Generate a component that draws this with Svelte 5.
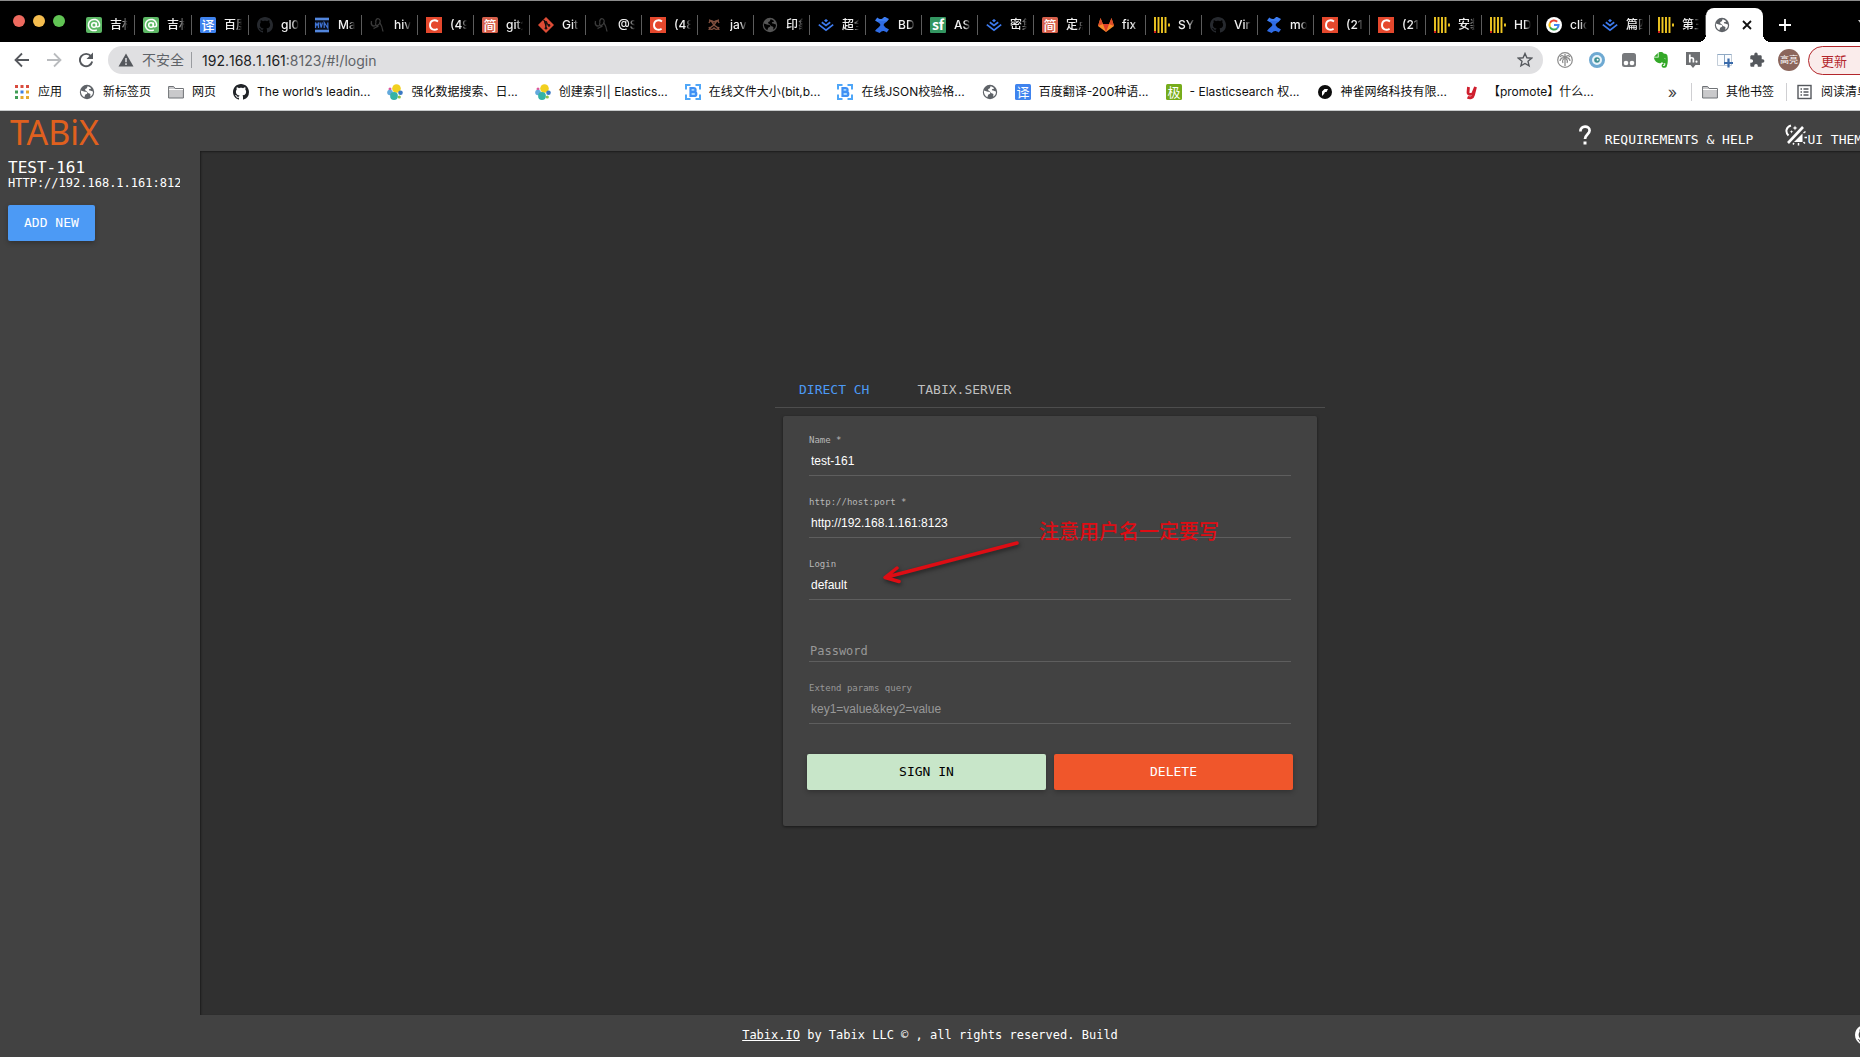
<script>
  let activeTab = $state('direct');
  let form = $state({
    name: 'test-161',
    host: 'http://192.168.1.161:8123',
    login: 'default',
    password: '',
    params: ''
  });

  const browserTabs = [
    { icon: 'mail', title: '吉林' },
    { icon: 'mail', title: '吉林' },
    { icon: 'yi', title: '百度' },
    { icon: 'githubDim', title: 'gl0b' },
    { icon: 'mvn', title: 'Mav' },
    { icon: 'hive', title: 'hive' },
    { icon: 'csdn', title: '(49条' },
    { icon: 'jian', title: 'git分' },
    { icon: 'git', title: 'Git -' },
    { icon: 'hive', title: '@Sp' },
    { icon: 'csdn', title: '(48条' },
    { icon: 'knot', title: 'java' },
    { icon: 'globeDim', title: '印象' },
    { icon: 'juejin', title: '超全' },
    { icon: 'confluence', title: 'BDP' },
    { icon: 'sf', title: 'ASC' },
    { icon: 'juejin', title: '密集' },
    { icon: 'jian', title: '定点' },
    { icon: 'gitlab', title: 'fix ' },
    { icon: 'clickhouse', title: 'SYS' },
    { icon: 'githubDim', title: 'Virt' },
    { icon: 'confluence', title: 'mo数' },
    { icon: 'csdn', title: '(21条' },
    { icon: 'csdn', title: '(21条' },
    { icon: 'clickhouse', title: '安装' },
    { icon: 'clickhouse', title: 'HDF' },
    { icon: 'google', title: 'click' },
    { icon: 'juejin', title: '篇四' },
    { icon: 'clickhouse', title: '第三' }
  ];

  const bookmarks = [
    { icon: 'apps', title: '应用' },
    { icon: 'globe', title: '新标签页' },
    { icon: 'folder', title: '网页' },
    { icon: 'github', title: 'The world’s leadin...' },
    { icon: 'elastic', title: '强化数据搜索、日...' },
    { icon: 'elastic', title: '创建索引| Elastics...' },
    { icon: 'bejson', title: '在线文件大小(bit,b...' },
    { icon: 'bejson', title: '在线JSON校验格...' },
    { icon: 'globe', title: '' },
    { icon: 'yi', title: '百度翻译-200种语...' },
    { icon: 'ji', title: '- Elasticsearch 权...' },
    { icon: 'compass', title: '神雀网络科技有限...' },
    { icon: 'yred', title: '【promote】什么...' }
  ];

  const extensions = ['palm', 'eye', 'robot', 'evernote', 'hypothesis', 'addPanel', 'puzzle'];
</script>

{#snippet tile(char, fill)}
  <rect width="16" height="16" rx="1.5" {fill} />
  <text x="8" y="12.6" text-anchor="middle" font-size="13" fill="#fff">{char}</text>
{/snippet}

{#snippet octocat(fill)}
  <path {fill} d="M8 0C3.58 0 0 3.58 0 8c0 3.54 2.29 6.53 5.47 7.59.4.07.55-.17.55-.38 0-.19-.01-.82-.01-1.49-2.01.37-2.53-.49-2.69-.94-.09-.23-.48-.94-.82-1.13-.28-.15-.68-.52-.01-.53.63-.01 1.08.58 1.23.82.72 1.21 1.87.87 2.33.66.07-.52.28-.87.51-1.07-1.78-.2-3.64-.89-3.64-3.95 0-.87.31-1.59.82-2.15-.08-.2-.36-1.02.08-2.12 0 0 .67-.21 2.2.82.64-.18 1.32-.27 2-.27s1.36.09 2 .27c1.53-1.04 2.2-.82 2.2-.82.44 1.1.16 1.92.08 2.12.51.56.82 1.27.82 2.15 0 3.07-1.87 3.75-3.65 3.95.29.25.54.73.54 1.48 0 1.07-.01 1.93-.01 2.2 0 .21.15.46.55.38A8.01 8.01 0 0 0 16 8c0-4.42-3.58-8-8-8z" />
{/snippet}

{#snippet globe(fill, land)}
  <circle cx="8" cy="8" r="7.2" {fill} />
  <path fill={land} d="M1.8 6.6 5 7.4c1.2.3 2.4.2 3 .9.8.8 0 1.9-1 2-.9.1-1 1-1.6 2.9C3.2 12.3 1.7 9.8 1.8 6.6zM8.6 2.2c1 .2 2.7 1 3.5 2.1-.5 1-1.4.4-2 .9-.7.6.1 1.3 1 1.3 1.3 0 1.5 1 2.9.9.1 2.4-1 4.2-2.7 5.3-.2-1.3.6-2.2-.3-2.9-.8-.6-2.2-.4-2.500-1.500-.3-1.200-1.600-1.300-2.300-2.100-.5-.8.3-1.600 1.200-1.800.8-.2.7-1.400 1.200-2.200z" />
{/snippet}

{#snippet icon(name)}
  <svg class="icon" viewBox="0 0 16 16" aria-hidden="true">
    {#if name === 'mail'}
      <rect width="16" height="16" rx="2" fill="#5db865" />
      <circle cx="8" cy="8" r="5.6" fill="none" stroke="#fff" stroke-width="1.5" stroke-dasharray="30 6" transform="rotate(60 8 8)" />
      <circle cx="8" cy="8" r="2.3" fill="none" stroke="#fff" stroke-width="1.5" />
      <path d="M10.4 5.6v3.2c0 1.5 2.6 1.5 3-.2" fill="none" stroke="#fff" stroke-width="1.4" />
    {:else if name === 'yi'}
      {@render tile('译', '#3f83ee')}
    {:else if name === 'jian'}
      {@render tile('简', '#d6604c')}
    {:else if name === 'ji'}
      {@render tile('极', '#76ac1b')}
    {:else if name === 'githubDim'}
      {@render octocat('#26292e')}
    {:else if name === 'github'}
      {@render octocat('#202327')}
    {:else if name === 'mvn'}
      <rect x="1" width="14" height="16" fill="#0a0f1c" />
      <path d="M1 2h14M1 14h14" stroke="#5286dd" stroke-width="2.4" />
      <path d="M1.500 11V5.500l1.500 3 1.500-3V11M6 5.500l1.200 5 1.200-5M10.200 11V5.500l3.600 5.500V5.500" fill="none" stroke="#3f74d6" stroke-width="1.200" />
    {:else if name === 'hive'}
      <path d="M1.500 4c-1 4 1 6 4 4.500M6 6c-1-3 1-5 3-4s1.500 5-1 6-3-1-2-2M9.500 5c2 3 3 6 3.500 9.500M8.500 9c-2 .5-3 2-5 2.500" fill="none" stroke="#3b3b3b" stroke-width="1.300" />
    {:else if name === 'csdn'}
      <rect width="16" height="16" fill="#e5482d" />
      <path d="M12 4.500C8.500 2 4 3.500 4 8.200c0 4.500 4.400 5.600 7.600 3.500" fill="none" stroke="#fff" stroke-width="1.900" />
    {:else if name === 'git'}
      <path d="M8 0l8 8-8 8-8-8z" fill="#de4c36" />
      <path d="M5.500 2.800 8 5.300v6M8 5.500l3 3" stroke="#1b1210" stroke-width="1.200" />
      <circle cx="8" cy="5.300" r="1.300" fill="#1b1210" />
      <circle cx="8" cy="11.300" r="1.300" fill="#1b1210" />
      <circle cx="11" cy="8.400" r="1.300" fill="#1b1210" />
    {:else if name === 'knot'}
      <path d="M3 3c3 0 3 3 5 5s5 2 5 5M13 3c-3 0-3 3-5 5s-5 2-5 5M3 6c1-3 3-3 5-1 2-2 4-2 5 1M3 10c1 3 3 3 5 1 2 2 4 2 5-1" fill="none" stroke="#80503f" stroke-width="1.400" />
    {:else if name === 'globeDim'}
      {@render globe('#555', '#000')}
    {:else if name === 'globe'}
      {@render globe('#5f6368', '#fff')}
    {:else if name === 'juejin'}
      <path d="M8 2l2 1.600L8 5.200 6 3.600z" fill="#3d7bf0" />
      <path d="M3.800 5.300 8 8.500l4.200-3.200M.8 7.600 8 13.200l7.200-5.600" fill="none" stroke="#3d7bf0" stroke-width="1.700" />
    {:else if name === 'confluence'}
      <path d="M1 3.500 3.300.5c3 2.300 5 2 7-1L15 2c-3 5-7.500 6-14 1.500z" fill="#3c7df3" />
      <path d="M15 12.500 12.700 15.500c-3-2.300-5-2-7 .5L1 14c3-5 7.500-6 14-1.500z" fill="#2f6ce5" />
      <path d="M4 4h8L9.500 8l3 4H3.500l3-4z" fill="#2f6ce5" />
    {:else if name === 'sf'}
      <rect width="16" height="16" rx="1" fill="#339661" />
      <text x="8" y="13" text-anchor="middle" font-size="14" font-weight="700" fill="#fff">sf</text>
    {:else if name === 'gitlab'}
      <path d="M8 15 0 9l2.500-8 2.400 6h6.200l2.400-6L16 9z" fill="#fa8e2b" />
      <path d="M8 15 4.900 7h6.200z" fill="#df3d28" />
      <path d="M0 9 2.500 1l2.400 6zM16 9l-2.500-8-2.400 6z" fill="#dd4b2a" />
    {:else if name === 'clickhouse'}
      <path d="M1 0v14M4.500 0v16M8 0v16M11.500 0v16M15 6.500v3" stroke="#f1c822" stroke-width="1.900" />
      <path d="M1 14v2" stroke="#e02020" stroke-width="1.900" />
    {:else if name === 'google'}
      <circle cx="8" cy="8" r="8" fill="#fff" />
      <path d="M11.200 4.700A4.600 4.600 0 0 0 4 5.800" fill="none" stroke="#ea4335" stroke-width="2" />
      <path d="M4 5.800a4.600 4.600 0 0 0 0 4.400" fill="none" stroke="#fbbc05" stroke-width="2" />
      <path d="M4 10.200a4.600 4.600 0 0 0 7 1.300" fill="none" stroke="#34a853" stroke-width="2" />
      <path d="M8 8h4.600c0 1.500-.6 2.700-1.600 3.500" fill="none" stroke="#4285f4" stroke-width="2" />
    {:else if name === 'apps'}
      <path d="M1 1h3v3H1zM6.500 1h3v3h-3zM12 1h3v3h-3z" fill="#d94c3f" />
      <path d="M1 6.500h3v3H1z" fill="#3f9c55" /><path d="M6.500 6.500h3v3h-3z" fill="#3f7fe0" /><path d="M12 6.500h3v3h-3z" fill="#e6a92d" />
      <path d="M1 12h3v3H1z" fill="#3f9c55" /><path d="M6.500 12h3v3h-3zM12 12h3v3h-3z" fill="#e6a92d" />
    {:else if name === 'folder'}
      <path d="M.6 2.500h5l1.500 2h8.300v9.500H.6z" fill="#c9c9cb" stroke="#6f7276" />
      <path d="M1 5.500h14" stroke="#fff" />
    {:else if name === 'elastic'}
      <circle cx="9.500" cy="4.500" r="4.300" fill="#f2d01f" />
      <circle cx="3" cy="5" r="1.500" fill="#e0569b" />
      <circle cx="3" cy="8.500" r="2.800" fill="#62a9dc" />
      <circle cx="13.500" cy="8.800" r="2.300" fill="#3a78c4" />
      <circle cx="7" cy="12" r="3.900" fill="#35b3a6" />
      <circle cx="12.300" cy="13" r="1.600" fill="#8bc34a" />
    {:else if name === 'bejson'}
      <path d="M1 5.500V1h4.500M10.500 1H15v4.500M15 10.500V15h-4.500M5.500 15H1v-4.500" fill="none" stroke="#4ea6f8" stroke-width="2" />
      <path d="M5.500 4h3c2.800 0 2.800 3.800 0 3.800h-3 3.400c3.200 0 3.200 4.200 0 4.200H5.500z" fill="#a9d8ff" stroke="#3f90f4" stroke-width="2.200" />
    {:else if name === 'compass'}
      <circle cx="8" cy="8" r="7" fill="#0c0c0c" />
      <path d="M5 12V7.500L7.500 5H11L9.500 8H8l-1 2z" fill="#fff" />
    {:else if name === 'yred'}
      <path d="M4.500 3 4 8.500c-.2 2.400 4.200 2.200 5 .500L11.500 3 9.500 11c-.6 2.800-3.500 3.300-6 2.200" fill="none" stroke="#cf1f2e" stroke-width="2.800" />
    {:else if name === 'palm'}
      <circle cx="8" cy="8" r="7.300" fill="none" stroke="#8b8b8b" stroke-width="1.200" />
      <path d="M8 6v8M8 6C6 3 4 3 3 5M8 6c2-3 4-3 5-1M8 6C5 5 3 7 3 9M8 6c3-1 5 1 5 3M8 6C6 7 5 9 6 11M8 6c2 1 3 3 2 5M8 6V2" fill="none" stroke="#8b8b8b" stroke-width="1.300" />
    {:else if name === 'eye'}
      <circle cx="8" cy="8" r="6.500" fill="#e8f3fa" stroke="#6ea9d2" stroke-width="3" />
      <circle cx="8" cy="8" r="2.800" fill="#3f8f92" />
      <circle cx="8.600" cy="7.800" r="1" fill="#fff" />
    {:else if name === 'robot'}
      <rect x="1" y="1" width="14" height="14" rx="2.500" fill="#77797c" />
      <circle cx="5" cy="11" r="2.300" fill="#fff" /><circle cx="11" cy="11" r="2.300" fill="#fff" />
    {:else if name === 'evernote'}
      <path d="M1 4.800 4.800 1v3.800zM5.600.5c2-.9 4.300-.4 5 .9 2 .3 3.500.6 3.800 2.200.8 4 .4 8.400-.8 11.100-.7 1.600-4.800 1.600-5-.8-.1-2 1.400-2.600 2.600-2.400v1.200c-1.500 0-1.400 1.400-.2 1.300 1.700-.2 1.400-2.600 1.100-3-1 .5-2.600-.1-3.100-1.100C7.500 12.500 1.800 11 .8 5.600h4.800z" fill="#33a828" />
      <path d="M11 6.800c.7-.6 1.600-.4 2 .5z" fill="#fff" />
    {:else if name === 'hypothesis'}
      <path d="M1 0h14v13h-4.500L8 16l-2.500-3H1z" fill="#6d6f72" />
      <path d="M4.800 2.500v8M4.800 7.300c.4-2 3.600-2.200 3.600.2v3" fill="none" stroke="#fff" stroke-width="1.700" />
      <circle cx="11.500" cy="9.700" r="1.100" fill="#fff" />
    {:else if name === 'addPanel'}
      <path d="M.5 2.500h14v11H.5z" fill="#fbfdff" stroke="#c3cdd8" />
      <path d="M.5 2.500h14M7.500 2v11" stroke="#8fa9c4" />
      <path d="M11.500 6.500v9M7 11h9" stroke="#3a6bab" stroke-width="2.200" />
    {:else if name === 'puzzle'}
      <path d="M13.700 7.300h-1V4.600c0-.8-.6-1.300-1.300-1.300H8.700v-1a1.700 1.700 0 0 0-3.400 0v1H2.700c-.8 0-1.400.6-1.400 1.300v2.600h1a1.800 1.800 0 0 1 0 3.600h-1v2.600c0 .7.6 1.300 1.400 1.300h2.500v-1a1.800 1.800 0 0 1 3.600 0v1h2.600c.7 0 1.300-.6 1.300-1.300v-2.700h1a1.700 1.700 0 0 0 0-3.400z" fill="#55585d" />
    {:else if name === 'list'}
      <rect x="1" y="1.500" width="13" height="13" fill="none" stroke="#55585d" stroke-width="1.400" />
      <path d="M3.500 5h1.500M3.500 8h1.500M3.500 11h1.500M6.500 5h5M6.500 8h5M6.500 11h5" stroke="#55585d" stroke-width="1.400" />
    {:else if name === 'back'}
      <path d="M15 8H2M8 1.500 1.500 8 8 14.500" fill="none" stroke="#55585d" stroke-width="1.800" />
    {:else if name === 'forward'}
      <path d="M1 8h13M8 1.500 14.500 8 8 14.500" fill="none" stroke="#b9bbbe" stroke-width="1.800" />
    {:else if name === 'reload'}
      <path d="M13 4.200A6.200 6.200 0 1 0 14.200 9.500" fill="none" stroke="#55585d" stroke-width="1.900" />
      <path d="M15 .5V7H8.500z" fill="#55585d" />
    {:else if name === 'warning'}
      <path d="M8 1.500 15.500 14.500H.5z" fill="#55585d" />
      <path d="M8 6v4.300M8 11.300v1.700" stroke="#e0e0e2" stroke-width="1.500" />
    {:else if name === 'star'}
      <path d="M8 1.500l1.900 4.300 4.700.4-3.600 3.100 1.100 4.600L8 11.500l-4.100 2.400L5 9.300 1.400 6.200l4.700-.4z" fill="none" stroke="#55585d" stroke-width="1.400" />
    {/if}
  </svg>
{/snippet}

<div class="screen">
  <header class="browser">
    <div class="tabstrip">
      <div class="lights">
        <span class="light red"></span>
        <span class="light yellow"></span>
        <span class="light green"></span>
      </div>
      {#each browserTabs as tab}
        <div class="tab">
          {@render icon(tab.icon)}
          <span class="tab-title">{tab.title}</span>
        </div>
      {/each}
      <div class="tab current">
        {@render icon('globe')}
        <button class="bare" aria-label="关闭">
          <svg width="10" height="10" viewBox="0 0 10 10"><path d="M1 1l8 8M9 1L1 9" stroke="#111" stroke-width="1.800" /></svg>
        </button>
      </div>
      <button class="bare new-tab" aria-label="新标签页">
        <svg width="12" height="12" viewBox="0 0 12 12"><path d="M6 0v12M0 6h12" stroke="#fff" stroke-width="1.800" /></svg>
      </button>
      <button class="bare tab-search" aria-label="搜索标签页">
        <svg width="12" height="8" viewBox="0 0 12 8"><path d="M0 0h12L6 8z" fill="#c8c8c8" /></svg>
      </button>
    </div>

    <div class="toolbar">
      <button class="bare" aria-label="后退">{@render icon('back')}</button>
      <button class="bare" aria-label="前进">{@render icon('forward')}</button>
      <button class="bare" aria-label="重新加载">{@render icon('reload')}</button>
      <div class="address">
        {@render icon('warning')}
        <span class="insecure">不安全</span>
        <span class="url"><b>192.168.1.161</b>:8123/#!/login</span>
        <button class="bare" aria-label="收藏">{@render icon('star')}</button>
      </div>
      {#each extensions as ext}
        <button class="bare" aria-label={ext}>{@render icon(ext)}</button>
      {/each}
      <span class="avatar">高亮</span>
      <button class="update">更新</button>
    </div>

    <nav class="bookmarks">
      {#each bookmarks as mark}
        <a href="#!/login">
          {@render icon(mark.icon)}
          {#if mark.title}<span>{mark.title}</span>{/if}
        </a>
      {/each}
      <span class="more">»</span>
      <a class="divided" href="#!/login">{@render icon('folder')}<span>其他书签</span></a>
      <a class="divided" href="#!/login">{@render icon('list')}<span>阅读清单</span></a>
    </nav>
  </header>

  <div class="app">
    <header class="topbar">
      <span class="logo">TABiX</span>
      <a class="help" href="#!/help">
        <svg width="12" height="20" viewBox="0 0 12 20"><path d="M1.400 6.500C1.400 0 10.600.2 10.600 5.600 10.600 9 6 9.500 6 14" fill="none" stroke="#fff" stroke-width="2.700" /><path d="M4.500 16.500h3v3h-3z" fill="#fff" /></svg>
        <span>REQUIREMENTS &amp; HELP</span>
      </a>
      <a class="theme" href="#!/theme">
        <svg width="22" height="22" viewBox="0 0 22 22">
          <path d="M6 1.500C1 3 0 8 3.500 11.500" fill="none" stroke="#fff" stroke-width="2" />
          <path d="M3 19 18 3" stroke="#fff" stroke-width="2.600" />
          <path d="M10 1.500l.7 1.800 1.800.7-1.800.7-.7 1.800-.7-1.800L7.500 4l1.800-.7zM6.500 6l.5 1.300 1.300.5L7 8.300l-.5 1.300L6 8.300l-1.300-.5L6 7.300z" fill="#fff" />
          <path d="M17.500 9.500v8.500H9z" fill="#fff" />
          <path d="M18.500 9l2-1.500M19.500 13.500h2.500M18.500 18l1.500 1.500M13.500 19v2.500M9 19l-1 1.500" stroke="#fff" stroke-width="1.500" />
        </svg>
        <span>UI THEME</span>
      </a>
    </header>

    <div class="body">
      <aside class="sidebar">
        <div class="conn-name">TEST-161</div>
        <div class="conn-host">HTTP://192.168.1.161:8123</div>
        <button class="btn add">ADD NEW</button>
      </aside>

      <div class="content">
        <main>
          <section class="login">
            <div class="modes" role="tablist">
              <button role="tab" aria-selected={activeTab === 'direct'} class:active={activeTab === 'direct'} onclick={() => (activeTab = 'direct')}>DIRECT CH</button>
              <button role="tab" aria-selected={activeTab === 'server'} class:active={activeTab === 'server'} onclick={() => (activeTab = 'server')}>TABIX.SERVER</button>
            </div>

            <form class="card" onsubmit={(e) => e.preventDefault()}>
              <div class="field">
                <label for="name">Name *</label>
                <input id="name" type="text" bind:value={form.name} />
              </div>
              <div class="field">
                <label for="host">http://host:port *</label>
                <input id="host" type="text" bind:value={form.host} />
              </div>
              <div class="field">
                <label for="login">Login</label>
                <input id="login" type="text" bind:value={form.login} />
              </div>
              <div class="field" class:empty={!form.password}>
                <label for="password">Password</label>
                <input id="password" type="password" bind:value={form.password} />
              </div>
              <div class="field muted">
                <label for="params">Extend params query</label>
                <input id="params" type="text" placeholder="key1=value&key2=value" bind:value={form.params} />
              </div>
              <div class="actions">
                <button class="btn sign-in" type="submit">SIGN IN</button>
                <button class="btn delete" type="button">DELETE</button>
              </div>

              <div class="note">
                <svg width="144" height="50" viewBox="0 0 144 50" aria-hidden="true">
                  <path d="M138 6 8 40M18 31 6 40.500l14 4" fill="none" stroke="#dd0d14" stroke-width="3.500" stroke-linecap="round" stroke-linejoin="round" />
                </svg>
                <span>注意用户名一定要写</span>
              </div>
            </form>
          </section>
        </main>

        <footer>
          <p><a href="https://tabix.io">Tabix.IO</a> by Tabix LLC © , all rights reserved. Build</p>
          <svg width="20" height="20" viewBox="0 0 16 16" aria-hidden="true">{@render octocat('#fff')}</svg>
        </footer>
      </div>
    </div>
  </div>
</div>

<style>
  :global(body) {
    overflow: hidden;
    background: #303030;
  }

  /* the window runs a little past the right edge of the screen */
  .screen {
    display: flex;
    flex-direction: column;
    width: calc(100% + 40px);
    min-height: 100vh;
    font-family: Inter, "Noto Sans CJK SC", sans-serif;
  }
  a {
    color: inherit;
    text-decoration: none;
  }
  button {
    font-family: inherit;
    cursor: pointer;
  }
  .bare {
    display: flex;
    padding: 0;
    border: 0;
    background: none;
  }
  .icon {
    flex: none;
    width: 16px;
    height: 16px;
    font-family: "Noto Sans CJK SC", sans-serif;
  }

  /* browser */
  .browser {
    background: #fff;
    border-bottom: 1px solid #c8cacb;
    white-space: nowrap;
  }
  .tabstrip {
    display: flex;
    align-items: flex-end;
    box-sizing: border-box;
    height: 42px;
    background: #000;
    border-top: 1px solid #8b8b8b;
  }
  .lights {
    display: flex;
    flex: none;
    gap: 8px;
    box-sizing: border-box;
    width: 78px;
    padding: 0 0 15px 13px;
  }
  .light {
    width: 12px;
    height: 12px;
    border-radius: 50%;
  }
  .red { background: #ee6a5f; }
  .yellow { background: #f5bd4f; }
  .green { background: #61c454; }
  .tab {
    position: relative;
    display: flex;
    flex: none;
    align-items: center;
    gap: 8px;
    box-sizing: border-box;
    width: 56px;
    height: 34px;
    padding: 0 7px 0 8px;
    color: #f1f1f1;
    font-size: 12px;
    font-weight: 500;
  }
  .tab:nth-child(-n + 5) {
    width: 57px;
  }
  .tab::after {
    content: "";
    position: absolute;
    right: 0;
    top: 7px;
    width: 1px;
    height: 20px;
    background: #5c5c5c;
  }
  .tab-title {
    width: 18px;
    overflow: hidden;
    line-height: 18px;
    mask-image: linear-gradient(to right, #000 60%, transparent);
  }
  .tab.current {
    gap: 12px;
    width: 57px;
    background: #fff;
    border-radius: 8px 8px 0 0;
  }
  .tab.current::before,
  .tab.current::after {
    content: "";
    position: absolute;
    top: auto;
    bottom: 0;
    width: 8px;
    height: 8px;
    background: radial-gradient(circle at 0 0, transparent 8px, #fff 8px);
  }
  .tab.current::before {
    left: -8px;
  }
  .tab.current::after {
    right: -8px;
    background: radial-gradient(circle at 100% 0, transparent 8px, #fff 8px);
  }
  .new-tab {
    margin: 0 0 11px 16px;
  }
  .tab-search {
    margin: 0 30px 14px auto;
  }

  .toolbar {
    display: flex;
    align-items: center;
    gap: 16px;
    height: 36px;
    padding: 0 8px 0 14px;
  }
  .address {
    display: flex;
    flex: 1;
    align-items: center;
    height: 28px;
    margin: 0 -2px;
    padding: 0 10px;
    border-radius: 14px;
    background: #e0e0e2;
    color: #5f6368;
    font-size: 14px;
  }
  .insecure {
    margin-left: 8px;
    padding-right: 7px;
    border-right: 1px solid #9a9ca0;
    line-height: 16px;
  }
  .url {
    flex: 1;
    margin-left: 10px;
    font-kerning: none;
  }
  .url b {
    color: #202124;
    font-weight: 400;
  }
  .avatar {
    width: 22px;
    height: 22px;
    margin: 0 -8px 0 -3px;
    border-radius: 50%;
    background: #8b665c;
    color: #fff;
    font-size: 9px;
    line-height: 22px;
    text-align: center;
  }
  .update {
    box-sizing: border-box;
    width: 84px;
    height: 29px;
    padding: 0 0 0 12px;
    border: 1px solid #b3262b;
    border-radius: 15px;
    background: #faeceb;
    color: #b3262b;
    font-size: 13px;
    text-align: left;
  }

  .bookmarks {
    display: flex;
    align-items: center;
    gap: 17px;
    height: 28px;
    padding: 0 0 4px 14px;
    color: #111;
    font-size: 12px;
  }
  .bookmarks a {
    display: flex;
    align-items: center;
    gap: 8px;
    line-height: 18px;
  }
  .more {
    margin-left: auto;
    margin-right: -3px;
    color: #444;
    font-size: 16px;
    line-height: 18px;
  }
  .bookmarks .divided {
    padding-left: 10px;
    border-left: 1px solid #cfcfd2;
    margin-right: -5px;
  }
  .bookmarks .divided:last-child {
    margin-right: 31px;
  }

  /* tabix */
  .app {
    display: flex;
    flex: 1;
    flex-direction: column;
    background: #424242;
    color: #fff;
    font-family: "DejaVu Sans Mono", monospace;
    font-size: 12px;
  }
  .topbar {
    display: flex;
    align-items: center;
    height: 40px;
    padding: 0 30px 0 10px;
    font-size: 13px;
  }
  .logo {
    margin-right: auto;
    padding-top: 2px;
    color: #e0601e;
    font-family: "Noto Sans", sans-serif;
    font-size: 34px;
    line-height: 40px;
  }
  .help,
  .theme {
    display: flex;
    align-items: center;
    padding-top: 8px;
  }
  .help span,
  .theme span {
    padding-top: 8px;
  }
  .help {
    gap: 14px;
    margin-right: 32px;
  }
  .body {
    display: flex;
    flex: 1;
  }
  .sidebar {
    box-sizing: border-box;
    width: 200px;
    padding: 8px 20px 0 8px;
  }
  .conn-name {
    font-size: 16px;
    line-height: 18px;
  }
  .conn-host {
    overflow: hidden;
    line-height: 13px;
    white-space: nowrap;
  }
  .btn {
    height: 36px;
    padding: 0 16px 2px;
    border: 0;
    border-radius: 2px;
    box-shadow: 0 2px 5px rgba(0, 0, 0, 0.26);
    color: #fff;
    font-size: 13px;
  }
  .add {
    margin-top: 15px;
    background: #4c9af5;
  }
  .content {
    display: flex;
    flex: 1;
    flex-direction: column;
  }
  main {
    display: flex;
    flex: 1;
    align-items: center;
    justify-content: center;
    background: #303030;
    box-shadow: inset 1px 1px 2px #1c1c1c;
  }
  .login {
    width: 550px;
  }
  .modes {
    display: flex;
    box-sizing: border-box;
    height: 68px;
    padding-top: 31px;
    border-bottom: 1px solid #4d4d4d;
  }
  .modes button {
    padding: 0 24px;
    border: 0;
    background: none;
    color: #bfbfbf;
    font-size: 13px;
  }
  .modes .active {
    color: #4c9af5;
  }
  .card {
    position: relative;
    margin: 8px 8px 0;
    padding: 18px 24px 36px;
    border-radius: 2px;
    background: #424242;
    box-shadow: 0 1px 3px rgba(0, 0, 0, 0.5);
  }
  .field {
    display: grid;
    grid-template-rows: 12px 30px;
    margin: 0 2px 20px;
  }
  .field label {
    color: #b8b8b8;
    font-size: 9px;
    line-height: 13px;
  }
  .field input {
    min-width: 0;
    padding: 0 2px;
    border: 0;
    border-bottom: 1px solid #5e5e5e;
    border-radius: 0;
    outline: 0;
    background: none;
    color: #fff;
    font-family: "Liberation Sans", sans-serif;
    font-size: 12px;
  }
  .field input::placeholder {
    color: #989898;
  }
  .field.muted label {
    color: #989898;
  }
  .field.empty label {
    grid-area: 2 / 1;
    align-self: end;
    padding: 0 1px 4px;
    color: #989898;
    font-size: 12px;
    line-height: 14px;
  }
  .field.empty input {
    grid-area: 2 / 1;
  }
  .actions {
    display: grid;
    grid-template-columns: 1fr 1fr;
    gap: 8px;
    margin-top: 30px;
  }
  .sign-in {
    background: #c8e6c9;
    color: #000;
  }
  .delete {
    background: #f0562b;
  }
  .note {
    position: absolute;
    left: 96px;
    top: 121px;
    display: flex;
    align-items: flex-start;
    gap: 16px;
    color: #dd0d14;
    font-family: "Noto Sans CJK SC", sans-serif;
    font-size: 20px;
    font-weight: 500;
    line-height: 24px;
    pointer-events: none;
  }
  .note svg {
    filter: drop-shadow(1px 2px 2px rgba(0, 0, 0, 0.5));
  }
  .note span {
    margin-top: -18px;
  }
  footer {
    display: flex;
    align-items: center;
    box-sizing: border-box;
    height: 42px;
    padding: 0 25px 2px 0;
  }
  footer p {
    flex: 1;
    margin: 0 195px 0 0;
    text-align: center;
  }
  footer a {
    text-decoration: underline;
  }
</style>
